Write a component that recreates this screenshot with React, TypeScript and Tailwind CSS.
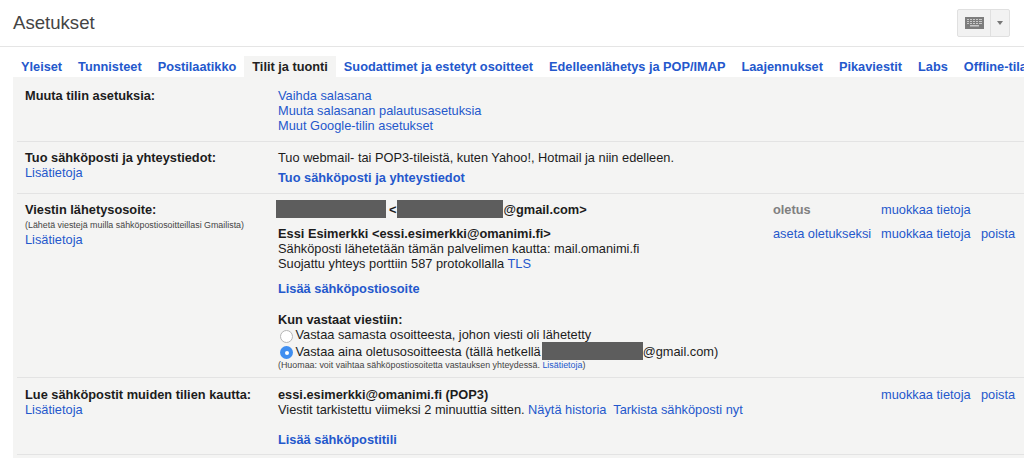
const tabs = ['Yleiset', 'Tunnisteet', 'Postilaatikko', 'Tilit ja tuonti', 'Suodattimet ja estetyt osoitteet', 'Edelleenlähetys ja POP/IMAP', 'Laajennukset', 'Pikaviestit', 'Labs', 'Offline-tila'];

function A({ children, bold }: { children: React.ReactNode; bold?: boolean }) {
  return <a className={bold ? 'font-bold text-[#2458cc]' : 'text-[#2458cc]'}>{children}</a>;
}

function Redacted({ w }: { w: string }) {
  return <span className={`inline-block bg-[#5d5d5d] h-[18px] -mt-[2px] ${w}`} />;
}

function Radio({ checked }: { checked?: boolean }) {
  if (checked) {
    return (
      <span className="w-[13px] h-[13px] rounded-full bg-[#3f8ef0] flex items-center justify-center shrink-0 mt-[2px]">
        <span className="w-[4px] h-[4px] rounded-full bg-white" />
      </span>
    );
  }
  return <span className="w-[13px] h-[13px] rounded-full bg-white border border-[#b5b5b5] shrink-0 mt-[3px]" />;
}

function KeyboardIcon() {
  return (
    <svg width="19" height="12" viewBox="0 0 19 12">
      <rect width="19" height="12" fill="#7d7d7d" />
      <g fill="#c9c9c9">
        <rect x="2" y="2" width="15" height="1" />
        <rect x="2" y="4" width="15" height="1" />
        <rect x="2" y="6" width="15" height="1" />
        <rect x="5" y="8" width="9" height="1.5" />
      </g>
      <g fill="#7d7d7d">
        <rect x="4" y="2" width="1" height="5" />
        <rect x="7" y="2" width="1" height="5" />
        <rect x="10" y="2" width="1" height="5" />
        <rect x="13" y="2" width="1" height="5" />
      </g>
    </svg>
  );
}

export default function App() {
  return (
    <div className="w-[1024px] h-[458px] overflow-hidden bg-white text-[12.8px] leading-[15px] text-[#1c1c1c] font-['Liberation_Sans',Arial,sans-serif]">
      <header className="h-[47px] border-b border-[#e5e5e5] pl-[13px] pr-[14px] flex items-center justify-between">
        <h1 className="text-[18.6px] text-[#444] font-normal -mt-[1px]">Asetukset</h1>
        <div className="flex h-[28px] w-[53px] -mt-[1px] bg-[#f2f2f2] border border-[#e0e0e0] rounded-[2px]">
          <div className="w-[33px] flex items-center justify-center border-r border-[#e0e0e0]">
            <KeyboardIcon />
          </div>
          <div className="flex-1 flex items-center justify-center">
            <span className="border-x-[3.5px] border-x-transparent border-t-[4px] border-t-[#777]" />
          </div>
        </div>
      </header>

      <nav className="flex pl-[13px] pt-[9px] h-[30px] whitespace-nowrap font-bold text-[12.76px]">
        {tabs.map((t) =>
          t === 'Tilit ja tuonti' ? (
            <span key={t} className="px-2 pt-[3px] bg-[#f4f4f3] text-[#222]">{t}</span>
          ) : (
            <a key={t} className="px-2 pt-[3px] text-[#2458cc]">{t}</a>
          ),
        )}
      </nav>

      <main className="ml-[13px] pl-1 bg-[#f4f4f3] h-[381px]">
        <section className="flex h-[65px] pt-[11px] border-b border-[#e3e3e3]">
          <div className="w-[261px] pl-2 font-bold">Muuta tilin asetuksia:</div>
          <div className="flex flex-col items-start">
            <A>Vaihda salasana</A>
            <A>Muuta salasanan palautusasetuksia</A>
            <A>Muut Google-tilin asetukset</A>
          </div>
        </section>

        <section className="flex h-[52px] pt-[8px] border-b border-[#e3e3e3]">
          <div className="w-[261px] pl-2 flex flex-col items-start">
            <b>Tuo sähköposti ja yhteystiedot:</b>
            <A>Lisätietoja</A>
          </div>
          <div className="flex flex-col items-start gap-[5px]">
            <span>Tuo webmail- tai POP3-tileistä, kuten Yahoo!, Hotmail ja niin edelleen.</span>
            <A bold>Tuo sähköposti ja yhteystiedot</A>
          </div>
        </section>

        <section className="flex h-[184px] pt-[8px] border-b border-[#e3e3e3]">
          <div className="w-[261px] pl-2 flex flex-col items-start">
            <b>Viestin lähetysosoite:</b>
            <span className="text-[8.9px] leading-[11px] mt-[3px] mb-[1px] text-[#444]">(Lähetä viestejä muilla sähköpostiosoitteillasi Gmailista)</span>
            <A>Lisätietoja</A>
          </div>
          <div className="flex-1">
            <div className="flex h-[24px]">
              <div className="w-[495px] -ml-[2px] mr-[2px] font-bold flex items-start">
                <Redacted w="w-[110px]" />
                <span className="ml-[3px] mr-[1px]">&lt;</span>
                <span className="flex items-start">
                  <Redacted w="w-[106px]" />
                  <span>@gmail.com&gt;</span>
                </span>
              </div>
              <div className="w-[108px] font-bold text-[#808080]">oletus</div>
              <A>muokkaa tietoja</A>
            </div>
            <div className="flex">
              <div className="w-[495px] flex flex-col items-start">
                <b>Essi Esimerkki &lt;essi.esimerkki@omanimi.fi&gt;</b>
                <span>Sähköposti lähetetään tämän palvelimen kautta: mail.omanimi.fi</span>
                <span>Suojattu yhteys porttiin 587 protokollalla <A>TLS</A></span>
              </div>
              <div className="w-[108px]"><A>aseta oletukseksi</A></div>
              <div className="w-[100px]"><A>muokkaa tietoja</A></div>
              <A>poista</A>
            </div>
            <div className="mt-[10px]"><A bold>Lisää sähköpostiosoite</A></div>
            <div className="mt-[16px] font-bold">Kun vastaat viestiin:</div>
            <div className="flex gap-[2.5px] items-start h-[17px] ml-[2px]">
              <Radio />
              <span>Vastaa samasta osoitteesta, johon viesti oli lähetetty</span>
            </div>
            <div className="flex gap-[2.5px] items-start h-[16px] ml-[2px]">
              <Radio checked />
              <span className="flex items-start">
                Vastaa aina oletusosoitteesta (tällä hetkellä
                <Redacted w="w-[101px] ml-[1px]" />
                @gmail.com)
              </span>
            </div>
            <div className="text-[8.9px] leading-[11px] text-[#444]">
              (Huomaa: voit vaihtaa sähköpostiosoitetta vastauksen yhteydessä. <A>Lisätietoja</A>)
            </div>
          </div>
        </section>

        <section className="flex h-[77px] pt-[9px] border-b border-[#e3e3e3]">
          <div className="w-[261px] pl-2 flex flex-col items-start">
            <b>Lue sähköpostit muiden tilien kautta:</b>
            <A>Lisätietoja</A>
          </div>
          <div className="flex-1">
            <div className="flex">
              <div className="w-[603px] flex flex-col items-start">
                <b>essi.esimerkki@omanimi.fi (POP3)</b>
                <span>Viestit tarkistettu viimeksi 2 minuuttia sitten. <A>Näytä historia</A>&nbsp; <A>Tarkista sähköposti nyt</A></span>
              </div>
              <div className="w-[100px]"><A>muokkaa tietoja</A></div>
              <A>poista</A>
            </div>
            <div className="mt-[15px]"><A bold>Lisää sähköpostitili</A></div>
          </div>
        </section>
      </main>
    </div>
  );
}
